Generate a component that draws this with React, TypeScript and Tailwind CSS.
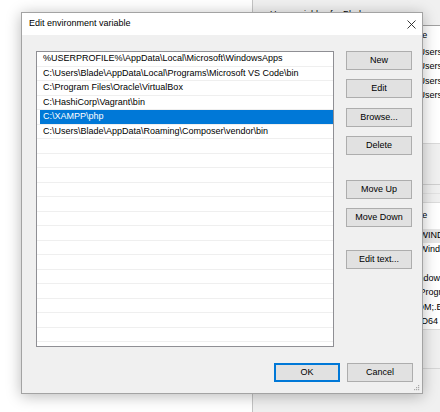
import React from "react";

const PATHS = [
  "%USERPROFILE%\\AppData\\Local\\Microsoft\\WindowsApps",
  "C:\\Users\\Blade\\AppData\\Local\\Programs\\Microsoft VS Code\\bin",
  "C:\\Program Files\\Oracle\\VirtualBox",
  "C:\\HashiCorp\\Vagrant\\bin",
  "C:\\XAMPP\\php",
  "C:\\Users\\Blade\\AppData\\Roaming\\Composer\\vendor\\bin",
];

const SELECTED = 4;

const USER_VARS = [
  ["OneDrive", "C:\\Users\\Blade\\OneDrive"],
  ["Path", "C:\\Users\\Blade\\AppData\\Local\\Microsoft\\WindowsApps;"],
  ["TEMP", "C:\\Users\\Blade\\AppData\\Local\\Temp"],
  ["TMP", "C:\\Users\\Blade\\AppData\\Local\\Temp"],
];

const SYSTEM_VARS = [
  ["ComSpec", "C:\\WINDOWS\\system32\\cmd.exe"],
  ["DriverData", "C:\\Windows\\System32\\Drivers\\DriverData"],
  ["NUMBER_OF_PROCESSORS", ""],
  ["OS", "Windows_NT"],
  ["Path", "C:\\Program Files\\Common Files"],
  ["PATHEXT", ".COM;.EXE;.BAT;.CMD;.VBS"],
  ["PROCESSOR_ARCHITECTURE", "AMD64"],
];

function Button({
  children,
  primary = false,
  className = "",
}: {
  children: React.ReactNode;
  primary?: boolean;
  className?: string;
}) {
  return (
    <button
      className={`h-[19px] w-[66px] flex items-center justify-center bg-[#e1e1e1] text-[9px] text-black ${
        primary ? "border-2 border-[#0078d7]" : "border border-[#adadad]"
      } ${className}`}
    >
      {children}
    </button>
  );
}

function BackgroundWindow() {
  return (
    <div className="absolute left-[252px] top-0 w-[200px] h-[412px] bg-[#f0f0f0] border-l border-[#c4c4c4] flex flex-col">
      <div className="h-[25px] pl-[17px] pt-[9px] leading-[10px]">
        User variables for Blade
      </div>
      {/* user variables list */}
      <div className="ml-[12px] h-[118px] bg-white border-t border-[#a0a0a0] flex flex-col">
        <div className="h-[19px] flex items-center pt-[1px]">
          <span className="w-[140px] shrink-0">Variable</span>
          <span className="whitespace-nowrap">Value</span>
        </div>
        {USER_VARS.map(([name, value]) => (
          <div key={name} className="h-[14.5px] flex items-center">
            <span className="w-[142px] shrink-0">{name}</span>
            <span className="whitespace-nowrap">{value}</span>
          </div>
        ))}
      </div>
      <div className="h-[41px] border-t border-[#dadada]" />
      <div className="h-[9px] border-t border-[#cfcfcf]" />
      <div className="h-[9px] border-t border-[#e2e2e2]" />
      {/* system variables list */}
      <div className="ml-[12px] h-[128px] bg-white border-t border-[#dcdcdc] border-b flex flex-col">
        <div className="h-[26px] flex items-end pb-[6px]">
          <span className="w-[140px] shrink-0">Variable</span>
          <span className="whitespace-nowrap">Value</span>
        </div>
        {SYSTEM_VARS.map(([name, value], i) => (
          <div
            key={name}
            className={`h-[14.5px] flex items-center ${i === 0 ? "bg-[#e6e6e6]" : ""}`}
          >
            <span className="w-[143px] shrink-0">{name}</span>
            <span className="whitespace-nowrap">{value}</span>
          </div>
        ))}
      </div>
      <div className="h-[38px]" />
      <div className="flex-1 border-t border-[#d6d6d6]" />
    </div>
  );
}

export default function App() {
  const rows = [...PATHS, ...Array(15).fill("")];

  return (
    <div
      className="relative w-[440px] h-[412px] bg-white overflow-hidden text-[9px] text-black"
      style={{ fontFamily: "'Liberation Sans', Arial, sans-serif" }}
    >
      <BackgroundWindow />

      {/* Dialog */}
      <div className="absolute left-[21px] top-[12px] w-[402px] h-[382px] border border-[#a3a3a3] bg-[#f0f0f0] shadow-[0_2px_14px_rgba(0,0,0,0.28)] flex flex-col">
        <div className="h-[22px] bg-white flex items-center justify-between pl-[7px] pr-[6px]">
          <span>Edit environment variable</span>
          <svg width="9" height="9" viewBox="0 0 9 9">
            <path d="M0.5 0.5 L8.5 8.5 M8.5 0.5 L0.5 8.5" stroke="#222" strokeWidth="0.9" />
          </svg>
        </div>

        <div className="flex-1 flex flex-col pl-[14px] pr-[9px] pt-[16px] pb-[11px]">
          <div className="flex gap-[12px]">
            {/* path list */}
            <div className="w-[298px] h-[296px] bg-white border border-[#8f8f94] overflow-hidden">
              {rows.map((p, i) => (
                <div
                  key={i}
                  className="h-[14.5px] border-b border-[#efefef] flex items-stretch"
                >
                  <div
                    className={`flex-1 ml-[3px] pl-[3px] flex items-center whitespace-nowrap ${
                      i === SELECTED ? "bg-[#0078d7] text-white" : ""
                    }`}
                  >
                    {p}
                  </div>
                </div>
              ))}
            </div>

            {/* side buttons */}
            <div className="flex flex-col">
              <Button>New</Button>
              <Button className="mt-[9px]">Edit</Button>
              <Button className="mt-[10px]">Browse...</Button>
              <Button className="mt-[9px]">Delete</Button>
              <Button className="mt-[25px]">Move Up</Button>
              <Button className="mt-[9px]">Move Down</Button>
              <Button className="mt-[23px]">Edit text...</Button>
            </div>
          </div>

          <div className="mt-auto flex justify-end gap-[7px]">
            <Button primary className="w-[65px]">OK</Button>
            <Button>Cancel</Button>
          </div>
        </div>

        {/* resize grip */}
        <svg className="absolute right-[2px] bottom-[2px]" width="6" height="6" viewBox="0 0 6 6">
          <rect x="4" y="0" width="1.2" height="1.2" fill="#a8a8a8" />
          <rect x="2" y="2" width="1.2" height="1.2" fill="#a8a8a8" />
          <rect x="4" y="2" width="1.2" height="1.2" fill="#a8a8a8" />
          <rect x="0" y="4" width="1.2" height="1.2" fill="#a8a8a8" />
          <rect x="2" y="4" width="1.2" height="1.2" fill="#a8a8a8" />
          <rect x="4" y="4" width="1.2" height="1.2" fill="#a8a8a8" />
        </svg>
      </div>
    </div>
  );
}
